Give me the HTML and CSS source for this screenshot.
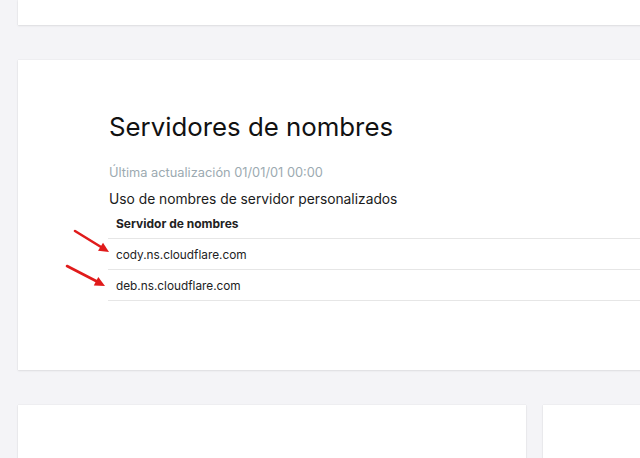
FILE: index.html
```html
<!DOCTYPE html>
<html lang="es">
<head>
  <meta charset="UTF-8">
  <meta name="viewport" content="width=device-width, initial-scale=1.0">
  <title>Servidores de nombres</title>
  <link rel="stylesheet" href="styles.css">
</head>
<body>

<div class="page">
  <div class="card card-top"></div>

  <div class="card card-dns">
    <h2 class="dns-title">Servidores de nombres</h2>
    <p class="dns-updated">Última actualización 01/01/01 00:00</p>
    <p class="dns-mode">Uso de nombres de servidor personalizados</p>

    <div class="ns-table">
      <div class="ns-row ns-head">Servidor de nombres</div>
      <div class="ns-row">cody.ns.cloudflare.com</div>
      <div class="ns-row">deb.ns.cloudflare.com</div>
    </div>

    <!-- red pointers next to the nameserver rows -->
    <svg class="pointers" width="60" height="70" viewBox="0 0 60 70">
      <g stroke="#e01b1b" stroke-width="2.6" stroke-linecap="round" fill="none">
        <line x1="11" y1="9" x2="37" y2="25"/>
        <line x1="3" y1="44" x2="33" y2="59.5"/>
      </g>
      <g fill="#e01b1b">
        <polygon points="45,30 34,28.8 39,20.7"/>
        <polygon points="41,64 29.8,63.4 34.3,55.1"/>
      </g>
    </svg>
  </div>

  <div class="card-row">
    <div class="card card-half"></div>
    <div class="card card-side"></div>
  </div>
</div>

</body>
</html>
```

FILE: styles.css
```css
body {
  margin: 0;
  background-color: #f4f4f7;
  font-family: Inter, "Open Sans", Arial, sans-serif;
  color: #111;
  overflow: hidden;
}

.page {
  padding-left: 18px;
  width: 760px;
}

.card {
  background-color: #fff;
  box-shadow: 0 1px 2px rgba(0, 0, 0, 0.08), 0 0 1px rgba(0, 0, 0, 0.12);
}

.card-top {
  height: 25px;
}

.card-dns {
  position: relative;
  margin-top: 35px;
  height: 310px;
  padding: 51px 0 0 91px;
  box-sizing: border-box;
}

.dns-title {
  margin: 0;
  font-size: 25.8px;
  font-weight: 400;
  color: #111;
}

.dns-updated {
  margin: 23px 0 0;
  font-size: 12.8px;
  color: #9caab1;
}

.dns-mode {
  margin: 11px 0 0;
  font-size: 13.8px;
  color: #1b1b1b;
}

.ns-table {
  margin-top: 5px;
  margin-left: -1px;
}

.ns-row {
  padding: 3px 0 0 8px;
  height: 27px;
  line-height: 27px;
  border-bottom: 1px solid #e6e6e6;
  font-size: 11.8px;
  color: #222;
}

.ns-head {
  padding-top: 0;
  height: 26px;
  line-height: 24px;
  font-weight: 700;
  font-size: 12px;
}

.pointers {
  position: absolute;
  left: 46px;
  top: 162px;
}

.card-row {
  display: flex;
  gap: 17px;
  margin-top: 35px;
}

.card-half {
  width: 508px;
  height: 60px;
}

.card-side {
  flex: 1;
  height: 60px;
}
```
